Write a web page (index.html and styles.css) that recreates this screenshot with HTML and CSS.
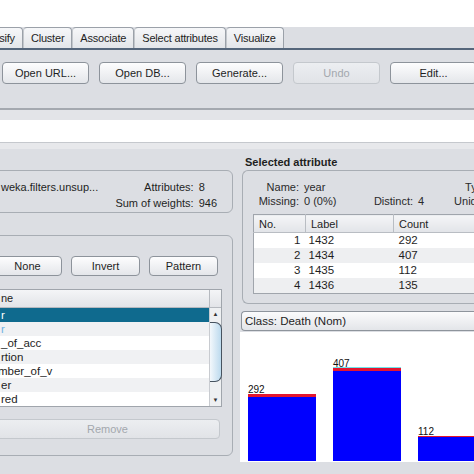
FILE: index.html
```html
<!DOCTYPE html>
<html lang="en">
<head>
    <meta charset="UTF-8">
    <meta name="viewport" content="width=device-width, initial-scale=1.0">
    <title>Weka Explorer - Preprocess</title>
    <link rel="stylesheet" href="styles.css">
</head>
<body>
    <div class="top-gap"></div>

    <div class="tabs">
        <div class="tab">Classify</div>
        <div class="tab">Cluster</div>
        <div class="tab">Associate</div>
        <div class="tab">Select attributes</div>
        <div class="tab">Visualize</div>
    </div>

    <div class="toolbar">
        <button class="btn">Open URL...</button>
        <button class="btn">Open DB...</button>
        <button class="btn">Generate...</button>
        <button class="btn" disabled>Undo</button>
        <button class="btn">Edit...</button>
    </div>
    <div class="strip"></div>
    <div class="filter-gap"></div>

    <div class="main">
        <div class="left">
            <div class="box relation">
                <div class="rel-name">weka.filters.unsup...</div>
                <div class="stats">
                    <span class="key">Attributes:</span><span>8</span>
                    <span class="key">Sum of weights:</span><span>946</span>
                </div>
            </div>

            <div class="box attributes">
                <div class="btn-row">
                    <button class="btn">None</button>
                    <button class="btn">Invert</button>
                    <button class="btn">Pattern</button>
                </div>

                <div class="attr-table">
                    <div class="attr-head">
                        <div class="attr-col">ne</div>
                        <div class="corner"></div>
                    </div>
                    <div class="attr-body">
                        <div class="attr-rows">
                            <div class="attr-row selected">r</div>
                            <div class="attr-row faint">r</div>
                            <div class="attr-row">_of_acc</div>
                            <div class="attr-row">rtion</div>
                            <div class="attr-row"><span class="cut">mber_of_v</span></div>
                            <div class="attr-row">er</div>
                            <div class="attr-row">red</div>
                        </div>
                        <div class="scrollbar">
                            <div class="arrow">&#9650;</div>
                            <div class="thumb"></div>
                            <div class="track"></div>
                            <div class="arrow">&#9660;</div>
                        </div>
                    </div>
                </div>

                <button class="btn remove" disabled>Remove</button>
            </div>
        </div>

        <div class="right">
            <div class="section-title">Selected attribute</div>
            <div class="box selected-attr">
                <div class="attr-stats">
                    <span class="key">Name:</span><span class="val">year</span>
                    <span></span><span></span>
                    <span class="key">Type:</span><span class="val">Nominal</span>
                    <span class="key">Missing:</span><span class="val">0 (0%)</span>
                    <span class="key">Distinct:</span><span class="val">4</span>
                    <span class="key">Unique:</span><span class="val">0 (0%)</span>
                </div>
                <table class="label-table">
                    <thead>
                        <tr><th class="no">No.</th><th class="lbl">Label</th><th>Count</th></tr>
                    </thead>
                    <tbody>
                        <tr><td class="no">1</td><td class="lbl">1432</td><td>292</td></tr>
                        <tr><td class="no">2</td><td class="lbl">1434</td><td>407</td></tr>
                        <tr><td class="no">3</td><td class="lbl">1435</td><td>112</td></tr>
                        <tr><td class="no">4</td><td class="lbl">1436</td><td>135</td></tr>
                    </tbody>
                </table>
            </div>

            <div class="combo">Class: Death (Nom)</div>

            <div class="chart">
                <div class="bar-col">
                    <span class="bar-label">292</span>
                    <div class="bar" style="height: 67px"></div>
                </div>
                <div class="bar-col">
                    <span class="bar-label">407</span>
                    <div class="bar tip" style="height: 93px"></div>
                </div>
                <div class="bar-col">
                    <span class="bar-label">112</span>
                    <div class="bar thin" style="height: 25px"></div>
                </div>
            </div>
        </div>
    </div>
</body>
</html>
```

FILE: styles.css
```css
body {
    margin: 0;
    width: 474px;
    height: 474px;
    overflow: hidden;
    background-color: #dcdee3;
    font-family: "Liberation Sans", Arial, sans-serif;
    font-size: 11px;
    color: #1e1e1e;
}

.top-gap {
    height: 27px;
    background: #fff;
}

/* tabs */
.tabs {
    display: flex;
    align-items: flex-end;
    height: 21px;
    margin-left: -30px;
    border-bottom: 2px solid #55667b;
}

.tab {
    height: 20px;
    line-height: 20px;
    padding: 0 7px;
    border: 1px solid #9ba1a9;
    border-bottom: none;
    border-left-color: #c3c7cc;
    border-radius: 4px 4px 0 0;
    background: linear-gradient(#f6f7f9, #e3e5e9);
    white-space: nowrap;
    letter-spacing: -0.2px;
}

/* buttons */
.btn {
    font: inherit;
    color: #1e1e1e;
    height: 22px;
    padding: 0;
    border: 1px solid #8d939b;
    border-radius: 4px;
    background: linear-gradient(#fdfdfe, #e4e6ea);
    flex: none;
}

.btn:disabled {
    color: #a3a7ad;
    border-color: #c4c8cd;
    background: linear-gradient(#eceef1, #e1e3e7);
}

.toolbar {
    display: flex;
    align-items: flex-start;
    gap: 10px;
    height: 46px;
    padding: 12px 0 0 2px;
    border-bottom: 2px solid #a4a8af;
}

.toolbar .btn {
    width: 87px;
}

.strip {
    height: 10px;
    background: #e3e4e8;
}

.filter-gap {
    height: 22px;
    background: #fff;
}

/* main area */
.main {
    display: flex;
    height: 331px;
    border-top: 1px solid #c5c8cd;
    background: linear-gradient(#e7e8eb 0, #e7e8eb 6px, #dcdee3 6px);
}

.box {
    border: 1px solid #a8adb4;
    border-radius: 6px;
    box-sizing: border-box;
}

.left {
    width: 233px;
    flex: none;
    padding-top: 27px;
}

.relation {
    display: flex;
    justify-content: space-between;
    height: 43px;
    margin-left: -6px;
    padding: 9px 15px 0 6px;
    line-height: 14px;
}

.stats {
    display: grid;
    grid-template-columns: auto auto;
    column-gap: 5px;
}

.key {
    text-align: right;
}

.attributes {
    height: 221px;
    margin: 22px 0 0 -6px;
    padding: 20px 10px 0 0;
}

.btn-row {
    display: flex;
    justify-content: flex-end;
    gap: 9px;
    padding-right: 4px;
}

.btn-row .btn {
    width: 69px;
    height: 20px;
}

.attr-table {
    margin-top: 13px;
    border: 1px solid #a0a5ac;
    background: #fff;
}

.attr-head {
    display: flex;
    height: 17px;
    line-height: 17px;
    border-bottom: 1px solid #b5b9bf;
    background: linear-gradient(#f4f5f7, #e2e4e8);
}

.attr-col {
    flex: 1;
    padding-left: 5px;
}

.corner {
    width: 11px;
    border-left: 1px solid #b5b9bf;
}

.attr-body {
    display: flex;
    height: 98px;
}

.attr-rows {
    flex: 1;
}

.attr-row {
    height: 14px;
    line-height: 14px;
    padding-left: 5px;
    font-size: 11.5px;
    overflow: hidden;
}

.attr-row:nth-child(even) {
    background: #f0f1f3;
}

.attr-row.selected {
    background: #0f6a8e;
    color: #fff;
}

.attr-row.faint {
    color: #6fb2e2;
}

.cut {
    margin-left: -3px;
}

.scrollbar {
    display: flex;
    flex-direction: column;
    width: 11px;
    border-left: 1px solid #c8cbd0;
    background: #eef0f2;
}

.arrow {
    height: 12px;
    line-height: 12px;
    font-size: 6px;
    text-align: center;
    color: #333;
}

.thumb {
    height: 58px;
    margin: 2px -1px 0 0;
    border: 1px solid #46525f;
    border-left: none;
    border-radius: 0 7px 7px 0;
    background: linear-gradient(to right, #f3f8fc, #bcdaee);
}

.track {
    flex: 1;
}

.remove {
    display: block;
    width: calc(100% - 2px);
    height: 20px;
    margin-top: 12px;
}

/* right column */
.right {
    width: 270px;
    flex: none;
    margin-left: 7px;
}

.section-title {
    height: 27px;
    padding: 12px 0 0 5px;
    box-sizing: border-box;
    line-height: 14px;
    font-weight: bold;
}

.selected-attr {
    height: 134px;
    margin-left: 2px;
    padding-top: 9px;
    border-right: none;
    border-radius: 6px 0 0 6px;
}

.attr-stats {
    display: grid;
    grid-template-columns: 56px 70px 44px 38px 41px auto;
    line-height: 14px;
    color: #2a2a2a;
}

.attr-stats .val {
    padding-left: 5px;
}

.label-table {
    width: 300px;
    margin: 6px 0 0 10px;
    border: 1px solid #a0a5ac;
    border-collapse: collapse;
    background: #fff;
}

.label-table th {
    height: 17px;
    padding: 0 0 0 5px;
    text-align: left;
    font-weight: normal;
    border-right: 1px solid #b9bdc3;
    border-bottom: 1px solid #b9bdc3;
    background: linear-gradient(#f4f5f7, #e2e4e8);
}

.label-table td {
    height: 15px;
    padding: 0 0 0 5px;
    line-height: 15px;
    font-size: 11.5px;
}

.label-table tbody tr:nth-child(even) {
    background: #eeeff1;
}

.label-table .no {
    width: 46px;
}

.label-table td.no {
    text-align: right;
    padding: 0 5px 0 0;
}

.label-table .lbl {
    width: 82px;
}

.label-table td.lbl {
    padding-left: 3px;
}

.combo {
    height: 20px;
    margin: 7px 0 0 1px;
    padding-left: 3px;
    line-height: 18px;
    box-sizing: border-box;
    border: 1px solid #8e949c;
    border-right: none;
    border-radius: 4px 0 0 4px;
    background: linear-gradient(#fbfbfc, #e3e5e9);
    font-size: 11.5px;
}

/* class distribution chart */
.chart {
    display: flex;
    align-items: flex-end;
    gap: 17px;
    height: 130px;
    margin-top: 1px;
    padding: 0 0 1px 8px;
    box-sizing: border-box;
    background: #fff;
}

.bar-col {
    display: flex;
    flex-direction: column;
    width: 68px;
    flex: none;
}

.bar-label {
    height: 8px;
    line-height: 8px;
    font-size: 10px;
    color: #111;
}

.bar {
    box-sizing: border-box;
    background: #0000ff;
    border-top: 3px solid #e3152f;
}

.bar.tip {
    box-shadow: 0 -1px 0 #6fe3ea;
}

.bar.thin {
    border-top-width: 1px;
}
```
